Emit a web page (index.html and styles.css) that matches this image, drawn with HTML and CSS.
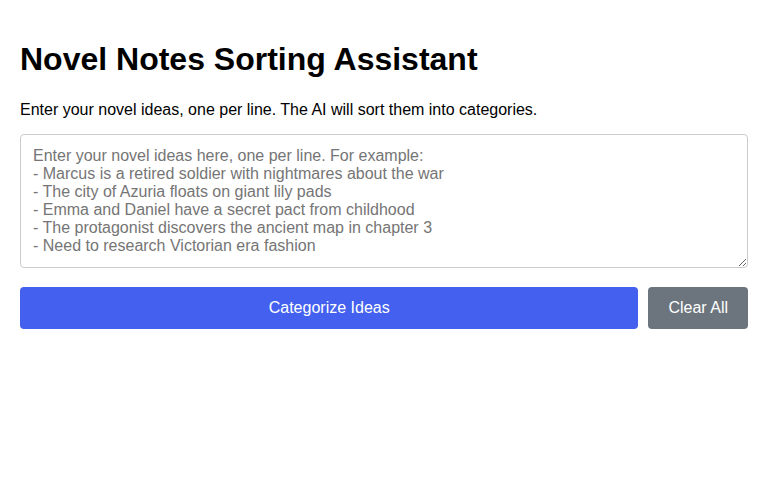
FILE: index.html
```html
<!DOCTYPE html>
<html lang="en">
<head>
<meta charset="utf-8">
<title>Novel Notes Sorting Assistant</title>
<link rel="stylesheet" href="styles.css">
</head>
<body>
<main class="app">
  <h1 class="title">Novel Notes Sorting Assistant</h1>
  <p class="intro">Enter your novel ideas, one per line. The AI will sort them into categories.</p>
  <textarea class="ideas" placeholder="Enter your novel ideas here, one per line. For example:
- Marcus is a retired soldier with nightmares about the war
- The city of Azuria floats on giant lily pads
- Emma and Daniel have a secret pact from childhood
- The protagonist discovers the ancient map in chapter 3
- Need to research Victorian era fashion"></textarea>
  <div class="actions">
    <button class="btn btn-primary">Categorize Ideas</button>
    <button class="btn btn-secondary">Clear All</button>
  </div>
</main>
</body>
</html>
```
FILE: styles.css
```css
html, body {
  margin: 0;
  padding: 0;
  background: #fff;
}
body {
  font-family: "Liberation Sans", Arial, sans-serif;
  color: #000;
}
.app {
  padding: 20px;
}
.title {
  font-size: 32px;
  font-weight: bold;
  margin: 21px 0 23px;
}
.intro {
  font-size: 16px;
  margin: 0 0 15px;
}
.ideas {
  display: block;
  box-sizing: border-box;
  width: 100%;
  height: 134px;
  padding: 12px;
  border: 1px solid #ccc;
  border-radius: 4px;
  font-family: "Liberation Sans", Arial, sans-serif;
  font-size: 16px;
  line-height: 18px;
  resize: vertical;
  margin: 0;
}
.ideas::placeholder {
  color: #757575;
}
.actions {
  display: flex;
  gap: 10px;
  margin-top: 19px;
}
.btn {
  font-family: "Liberation Sans", Arial, sans-serif;
  font-size: 16px;
  color: #fff;
  border: none;
  border-radius: 4px;
  padding: 12px 20px;
  height: 42px;
  cursor: pointer;
}
.btn-primary {
  flex: 1;
  background: #4361ee;
}
.btn-secondary {
  background: #6c757d;
}
```
